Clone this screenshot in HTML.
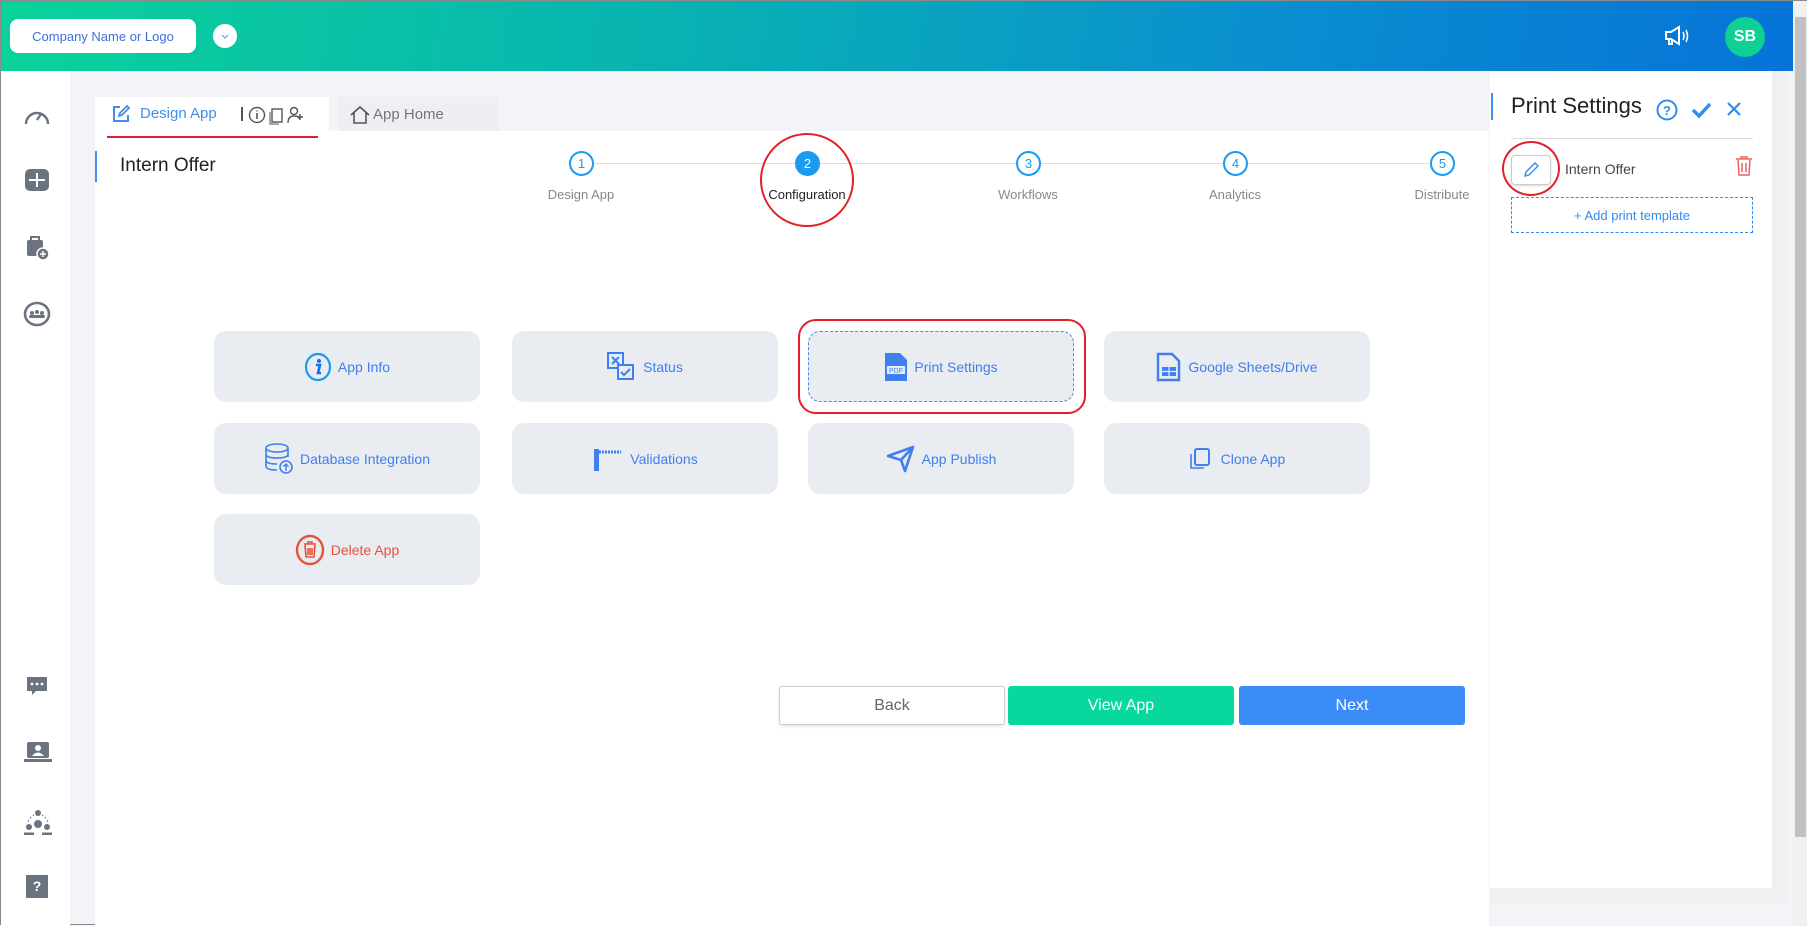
<!DOCTYPE html>
<html><head><meta charset="utf-8"><style>
*{box-sizing:border-box;margin:0;padding:0}
body{width:1807px;height:925px;overflow:hidden;font-family:"Liberation Sans",sans-serif;background:#f3f4f8;position:relative;border:1px solid #8a8a8a}
.abs{position:absolute}
.hdr{left:0;top:0;width:1792px;height:70px;background:linear-gradient(100deg,#0bd29a 0%,#08b5b0 35%,#0a8fcf 70%,#0673d8 100%)}
.side{left:0;top:70px;width:69px;height:855px;background:#fff}
.card{background:#e9ecf1;border-radius:12px;width:266px;height:71px;display:flex;align-items:center;justify-content:center;color:#3f7ff0;font-size:14px;gap:6px}
.step{width:25px;height:25px;border-radius:50%;border:2px solid #1a9bf0;color:#1a9bf0;font-size:13px;display:flex;align-items:center;justify-content:center;background:#fff}
.lbl{font-size:13px;color:#888;transform:translateX(-50%)}
.btn{height:39px;width:226px;border-radius:3px;display:flex;align-items:center;justify-content:center;font-size:16px}
</style></head><body>
<div class="abs hdr"></div>
<div class="abs" style="left:9px;top:18px;width:186px;height:34px;background:#fff;border-radius:8px;color:#3b6fe0;font-size:13px;display:flex;align-items:center;justify-content:center">Company Name or Logo</div>
<div class="abs" style="left:212px;top:23px;width:24px;height:24px;border-radius:50%;background:#fff"><svg width="24" height="24"><path d="M9 11l3 3 3-3" fill="none" stroke="#6b8bd6" stroke-width="1"/></svg></div>
<svg class="abs" style="left:1662px;top:24px" width="28" height="22" viewBox="0 0 28 22"><path d="M3 7h5l8-5v17l-8-5H3z M6 14v5h3v-5" fill="none" stroke="#fff" stroke-width="2"/><path d="M20 7q2 4 0 8M23 5q3 6 0 12" fill="none" stroke="#fff" stroke-width="1.6"/></svg>
<div class="abs" style="left:1724px;top:16px;width:40px;height:40px;border-radius:50%;background:#0fd093;color:#fff;font-weight:bold;font-size:16px;display:flex;align-items:center;justify-content:center">SB</div>
<div class="abs" style="left:1792px;top:0;width:15px;height:925px;background:#f0f0f0"><div style="margin:16px 2px;height:820px;background:#c1c1c1"></div></div>

<div class="abs side"></div>
<svg class="abs" style="left:22px;top:102px" width="28" height="24"><path d="M3 21A11 11 0 1 1 25 21" fill="none" stroke="#6b7280" stroke-width="2.4"/><path d="M14 17l4-6" stroke="#6b7280" stroke-width="2.4"/></svg>
<svg class="abs" style="left:24px;top:168px" width="26" height="24"><rect x="0" y="0" width="24" height="22" rx="5" fill="#6b7280"/><path d="M12 4v14M4 11h16" stroke="#fff" stroke-width="2"/></svg>
<svg class="abs" style="left:25px;top:233px" width="24" height="28"><rect x="1" y="6" width="16" height="16" rx="2" fill="#6b7280"/><path d="M5 6V3h8v3" fill="none" stroke="#6b7280" stroke-width="2"/><circle cx="17" cy="20" r="6" fill="#6b7280" stroke="#fff" stroke-width="1.5"/><path d="M14 20h6M17 17v6" stroke="#fff" stroke-width="1.5"/></svg>
<svg class="abs" style="left:22px;top:300px" width="28" height="26"><ellipse cx="14" cy="13" rx="12" ry="11" fill="none" stroke="#6b7280" stroke-width="2.6"/><circle cx="9" cy="12" r="2" fill="#6b7280"/><circle cx="14" cy="11" r="2" fill="#6b7280"/><circle cx="19" cy="12" r="2" fill="#6b7280"/><rect x="6" y="14" width="16" height="3" rx="1.5" fill="#6b7280"/></svg>
<svg class="abs" style="left:25px;top:675px" width="24" height="22"><path d="M1 1h20v14H10l-4 4v-4H1z" fill="#6b7280"/><circle cx="6" cy="8" r="1.4" fill="#fff"/><circle cx="11" cy="8" r="1.4" fill="#fff"/><circle cx="16" cy="8" r="1.4" fill="#fff"/></svg>
<svg class="abs" style="left:23px;top:741px" width="28" height="22"><rect x="3" y="0" width="22" height="16" rx="2" fill="#6b7280"/><circle cx="14" cy="6" r="3" fill="#fff"/><path d="M8 14q6-7 12 0z" fill="#fff"/><rect x="0" y="17" width="28" height="3" fill="#6b7280"/></svg>
<svg class="abs" style="left:23px;top:808px" width="28" height="26"><circle cx="14" cy="4" r="3" fill="#6b7280"/><circle cx="5" cy="18" r="3" fill="#6b7280"/><circle cx="23" cy="18" r="3" fill="#6b7280"/><circle cx="14" cy="15" r="4" fill="#6b7280"/><path d="M0 25h10M18 25h10" stroke="#6b7280" stroke-width="3"/><path d="M4 13q2-5 6-7M24 13q-2-5-6-7" fill="none" stroke="#6b7280" stroke-dasharray="2 2"/></svg>
<svg class="abs" style="left:24px;top:874px" width="26" height="26"><rect x="1" y="0" width="22" height="20" fill="#6b7280"/><rect x="1" y="20" width="22" height="3" fill="#6b7280"/><text x="12" y="16" text-anchor="middle" font-size="14" font-weight="bold" fill="#fff" font-family="Liberation Sans">?</text></svg>

<div class="abs" style="left:94px;top:130px;width:1394px;height:795px;background:#fff"></div>
<div class="abs" style="left:94px;top:96px;width:234px;height:34px;background:#fff"></div>
<div class="abs" style="left:338px;top:96px;width:160px;height:34px;background:#eeeff2"></div>
<svg class="abs" style="left:110px;top:103px" width="20" height="20"><path d="M9 3H3v14h14v-6" fill="none" stroke="#3f8ef0" stroke-width="2"/><path d="M8 12l1-3 7-7 2 2-7 7z" fill="none" stroke="#3f8ef0" stroke-width="1.8"/></svg>
<div class="abs" style="left:139px;top:104px;font-size:15px;color:#3f8ef0">Design App</div>
<div class="abs" style="left:240px;top:106px;width:2px;height:14px;background:#555"></div>
<svg class="abs" style="left:247px;top:104px" width="60" height="20"><circle cx="9" cy="10" r="7.5" fill="none" stroke="#555" stroke-width="1.4"/><path d="M9 8v6M9 5.5v1" stroke="#555" stroke-width="1.6"/><rect x="24" y="4" width="10" height="13" fill="none" stroke="#555" stroke-width="1.4"/><path d="M22 7v12h9" fill="none" stroke="#555"/><circle cx="46" cy="6" r="3.5" fill="none" stroke="#555" stroke-width="1.4"/><path d="M40 18q0-7 6-7t5 3M52 9v6M49 12h6" fill="none" stroke="#555" stroke-width="1.4"/></svg>
<div class="abs" style="left:106px;top:135px;width:211px;height:2px;background:#e3202a"></div>
<svg class="abs" style="left:348px;top:104px" width="22" height="20"><path d="M2 10l9-8 9 8M5 8v10h12V8" fill="none" stroke="#555" stroke-width="1.6"/></svg>
<div class="abs" style="left:372px;top:105px;font-size:15px;color:#777">App Home</div>

<div class="abs" style="left:94px;top:150px;width:2px;height:31px;background:#3f8ef0"></div>
<div class="abs" style="left:119px;top:154px;font-size:19px;color:#222">Intern Offer</div>

<div class="abs" style="left:590px;top:162px;width:840px;height:1px;background:#ddd"></div>
<div class="abs step" style="left:568px;top:150px">1</div>
<div class="abs step" style="left:794px;top:150px;background:#1a9bf0;color:#fff">2</div>
<div class="abs step" style="left:1015px;top:150px">3</div>
<div class="abs step" style="left:1222px;top:150px">4</div>
<div class="abs step" style="left:1429px;top:150px">5</div>
<div class="abs lbl" style="left:580px;top:186px">Design App</div>
<div class="abs lbl" style="left:806px;top:186px;color:#222">Configuration</div>
<div class="abs lbl" style="left:1027px;top:186px">Workflows</div>
<div class="abs lbl" style="left:1234px;top:186px">Analytics</div>
<div class="abs lbl" style="left:1441px;top:186px">Distribute</div>
<div class="abs" style="left:759px;top:132px;width:94px;height:94px;border-radius:50%;border:2px solid #e3202a"></div>

<div class="abs card" style="left:213px;top:330px"><svg width="28" height="30"><ellipse cx="14" cy="15" rx="12" ry="13" fill="none" stroke="#1a9bf0" stroke-width="2.2"/><circle cx="15" cy="9" r="2" fill="#1a6fe0"/><path d="M12 13h4l-2 8h3" fill="none" stroke="#1a6fe0" stroke-width="2.6"/></svg>App Info</div>
<div class="abs card" style="left:511px;top:330px"><svg width="30" height="30"><rect x="1" y="1" width="15" height="15" fill="none" stroke="#3f7ff0" stroke-width="2"/><path d="M5 5l7 7M12 5l-7 7" stroke="#3f7ff0" stroke-width="2"/><rect x="11" y="13" width="15" height="14" fill="#e9ecf1" stroke="#3f7ff0" stroke-width="2"/><path d="M14 20l3 3 6-6" fill="none" stroke="#3f7ff0" stroke-width="2"/></svg>Status</div>
<div class="abs" style="left:797px;top:318px;width:288px;height:95px;border-radius:18px;border:2px solid #e3202a"></div>
<div class="abs card" style="left:807px;top:330px;border:1px dashed #3f8ef0"><svg width="24" height="30"><path d="M1 1h15l7 7v21H1z" fill="#3f7ff0"/><rect x="3" y="14" width="18" height="8" fill="#e9ecf1"/><text x="12" y="21" text-anchor="middle" font-size="7" fill="#3f7ff0" font-family="Liberation Sans">PDF</text></svg>Print Settings</div>
<div class="abs card" style="left:1103px;top:330px"><svg width="26" height="30"><path d="M2 2h14l7 7v19H2z" fill="none" stroke="#3f7ff0" stroke-width="2.4"/><rect x="6" y="15" width="14" height="9" fill="#3f7ff0"/><path d="M6 19.5h14M13 15v9" stroke="#e9ecf1" stroke-width="1.2"/></svg>Google Sheets/Drive</div>
<div class="abs card" style="left:213px;top:422px"><svg width="30" height="32"><ellipse cx="13" cy="5" rx="11" ry="4" fill="none" stroke="#3f7ff0" stroke-width="1.6"/><path d="M2 5v18q0 4 11 4M24 5v9M2 11q0 4 11 4t11-4M2 17q0 4 11 4" fill="none" stroke="#3f7ff0" stroke-width="1.6"/><circle cx="22" cy="24" r="6" fill="#e9ecf1" stroke="#3f7ff0" stroke-width="1.6"/><path d="M22 28v-7M19.5 23.5l2.5-2.5 2.5 2.5" fill="none" stroke="#3f7ff0" stroke-width="1.4"/></svg>Database Integration</div>
<div class="abs card" style="left:511px;top:422px"><svg width="32" height="26"><rect x="2" y="3" width="5" height="22" fill="#3f7ff0"/><path d="M7 6h22" stroke="#3f7ff0" stroke-width="3" stroke-dasharray="2 1"/></svg>Validations</div>
<div class="abs card" style="left:807px;top:422px"><svg width="30" height="30"><path d="M2 12L27 3 19 27 15 16z M15 16L27 3" fill="none" stroke="#3f7ff0" stroke-width="2.6" stroke-linejoin="round"/></svg>App Publish</div>
<div class="abs card" style="left:1103px;top:422px"><svg width="22" height="24"><rect x="6" y="2" width="14" height="16" rx="2" fill="none" stroke="#3f7ff0" stroke-width="2"/><path d="M2 7v14h13" fill="none" stroke="#3f7ff0" stroke-width="1.6"/></svg>&nbsp;Clone App</div>
<div class="abs card" style="left:213px;top:513px;color:#e5533d"><svg width="30" height="32"><ellipse cx="15" cy="16" rx="13" ry="14" fill="none" stroke="#e5533d" stroke-width="2.4"/><path d="M9 10h12M13 10V8h4v2M10 11l1 12h8l1-12M13 14v7M15 14v7M17 14v7" fill="none" stroke="#e5533d" stroke-width="1.6"/></svg>Delete App</div>

<div class="abs btn" style="left:778px;top:685px;border:1px solid #ccc;background:#fff;color:#666;box-shadow:0 2px 3px rgba(0,0,0,.1)">Back</div>
<div class="abs btn" style="left:1007px;top:685px;background:#08d89e;color:#fff">View App</div>
<div class="abs btn" style="left:1238px;top:685px;background:#3c8cf7;color:#fff">Next</div>

<div class="abs" style="left:1488px;top:70px;width:304px;height:855px;background:#f3f4f8"></div>
<div class="abs" style="left:1489px;top:70px;width:282px;height:817px;background:#fff"></div>
<div class="abs" style="left:1771px;top:70px;width:15px;height:817px;background:#f0f0f0"></div>
<div class="abs" style="left:1489px;top:887px;width:297px;height:16px;background:#f0f0f0"></div>
<div class="abs" style="left:1490px;top:92px;width:2px;height:27px;background:#3f8ef0"></div>
<div class="abs" style="left:1510px;top:92px;font-size:22px;color:#222">Print Settings</div>
<svg class="abs" style="left:1655px;top:96px" width="100" height="26"><circle cx="11" cy="13" r="9.5" fill="none" stroke="#2d8ef0" stroke-width="2"/><text x="11" y="18" text-anchor="middle" font-size="13" font-weight="bold" fill="#2d8ef0" font-family="Liberation Sans">?</text><path d="M37 13l6 6 11-12" fill="none" stroke="#2d8ef0" stroke-width="3.4"/><path d="M72 6l12 12M84 6l-12 12" stroke="#2d8ef0" stroke-width="2.2"/></svg>
<div class="abs" style="left:1510px;top:137px;width:242px;height:1px;background:#ddd"></div>
<div class="abs" style="left:1510px;top:154px;width:40px;height:30px;border:1px solid #ccc;border-radius:4px;background:#fff;box-shadow:0 1px 2px rgba(0,0,0,.15)"><svg width="38" height="28"><path d="M13 20l1-4 9-9 3 3-9 9z" fill="none" stroke="#2d8ef0" stroke-width="1.4"/></svg></div>
<div class="abs" style="left:1501px;top:140px;width:58px;height:55px;border-radius:50%;border:2px solid #e3202a"></div>
<div class="abs" style="left:1564px;top:160px;font-size:14px;color:#444">Intern Offer</div>
<svg class="abs" style="left:1734px;top:155px" width="18" height="20"><path d="M1 3h16M6 3V1h6v2M3 4l1 15h10l1-15M7 7v9M11 7v9" fill="none" stroke="#f06060" stroke-width="1.5"/></svg>
<div class="abs" style="left:1510px;top:196px;width:242px;height:36px;border:1px dashed #2d8ef0;color:#2d8ef0;font-size:13px;display:flex;align-items:center;justify-content:center">+ Add print template</div>
</body></html>
